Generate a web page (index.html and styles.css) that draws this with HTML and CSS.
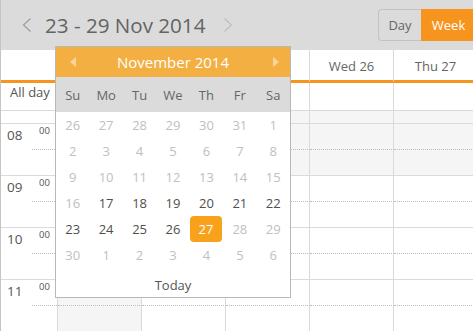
FILE: index.html
```html
<!DOCTYPE html>
<html>
<head>
<meta charset="utf-8">
<title>Scheduler</title>
<link rel="stylesheet" href="styles.css">
</head>
<body>
<div class="scheduler">
  <div class="toolbar">
    <span class="nav-btn prev"><svg width="10" height="14" viewBox="0 0 10 14"><polyline points="8.5,0.5 1.5,7 8.5,13.5" fill="none" stroke="#9a9a9a" stroke-width="1.1"/></svg></span>
    <span class="range">23 - 29 Nov 2014</span>
    <span class="nav-btn next"><svg width="10" height="14" viewBox="0 0 10 14"><polyline points="1.5,0.5 8.5,7 1.5,13.5" fill="none" stroke="#bdbdbd" stroke-width="1.1"/></svg></span>
    <div class="views">
      <span class="view day">Day</span>
      <span class="view week">Week</span>
    </div>
  </div>

  <div class="head-row days">
    <div class="tcell"></div>
    <div class="dcell">Sun 23</div>
    <div class="dcell">Mon 24</div>
    <div class="dcell">Tue 25</div>
    <div class="dcell">Wed 26</div>
    <div class="dcell">Thu 27</div>
    <div class="dcell">Fri 28</div>
    <div class="dcell">Sat 29</div>
  </div>
  <div class="head-row allday">
    <div class="tcell">All day</div>
    <div class="dcell"></div><div class="dcell"></div><div class="dcell"></div><div class="dcell"></div><div class="dcell"></div><div class="dcell"></div><div class="dcell"></div>
  </div>

  <div class="content">
    <div class="row part">
      <div class="tcell"></div>
      <div class="dcell off"></div><div class="dcell off"></div><div class="dcell off"></div><div class="dcell off"></div><div class="dcell off"></div><div class="dcell off"></div><div class="dcell off"></div>
    </div>
    <div class="row half1">
      <div class="tcell"><span class="hr">08</span><span class="mn">00</span></div>
      <div class="dcell off"></div><div class="dcell off"></div><div class="dcell off"></div><div class="dcell off"></div><div class="dcell off"></div><div class="dcell off"></div><div class="dcell off"></div>
    </div>
    <div class="row half2">
      <div class="tcell"></div>
      <div class="dcell off"></div><div class="dcell off"></div><div class="dcell off"></div><div class="dcell off"></div><div class="dcell off"></div><div class="dcell off"></div><div class="dcell off"></div>
    </div>
    <div class="row half1">
      <div class="tcell"><span class="hr">09</span><span class="mn">00</span></div>
      <div class="dcell off"></div><div class="dcell"></div><div class="dcell"></div><div class="dcell"></div><div class="dcell"></div><div class="dcell"></div><div class="dcell off"></div>
    </div>
    <div class="row half2">
      <div class="tcell"></div>
      <div class="dcell off"></div><div class="dcell"></div><div class="dcell"></div><div class="dcell"></div><div class="dcell"></div><div class="dcell"></div><div class="dcell off"></div>
    </div>
    <div class="row half1">
      <div class="tcell"><span class="hr">10</span><span class="mn">00</span></div>
      <div class="dcell off"></div><div class="dcell"></div><div class="dcell"></div><div class="dcell"></div><div class="dcell"></div><div class="dcell"></div><div class="dcell off"></div>
    </div>
    <div class="row half2">
      <div class="tcell"></div>
      <div class="dcell off"></div><div class="dcell"></div><div class="dcell"></div><div class="dcell"></div><div class="dcell"></div><div class="dcell"></div><div class="dcell off"></div>
    </div>
    <div class="row half1">
      <div class="tcell"><span class="hr">11</span><span class="mn">00</span></div>
      <div class="dcell off"></div><div class="dcell"></div><div class="dcell"></div><div class="dcell"></div><div class="dcell"></div><div class="dcell"></div><div class="dcell off"></div>
    </div>
    <div class="row half2">
      <div class="tcell"></div>
      <div class="dcell off"></div><div class="dcell"></div><div class="dcell"></div><div class="dcell"></div><div class="dcell"></div><div class="dcell"></div><div class="dcell off"></div>
    </div>
  </div>

  <div class="popup">
    <div class="cal-head">
      <span class="arr left"></span>
      <span class="cal-title">November 2014</span>
      <span class="arr right"></span>
    </div>
    <div class="cal-dow">
      <span>Su</span><span>Mo</span><span>Tu</span><span>We</span><span>Th</span><span>Fr</span><span>Sa</span>
    </div>
    <div class="cal-grid">
      <span class="dis">26</span><span class="dis">27</span><span class="dis">28</span><span class="dis">29</span><span class="dis">30</span><span class="dis">31</span><span class="dis">1</span>
      <span class="dis">2</span><span class="dis">3</span><span class="dis">4</span><span class="dis">5</span><span class="dis">6</span><span class="dis">7</span><span class="dis">8</span>
      <span class="dis">9</span><span class="dis">10</span><span class="dis">11</span><span class="dis">12</span><span class="dis">13</span><span class="dis">14</span><span class="dis">15</span>
      <span class="dis">16</span><span>17</span><span>18</span><span>19</span><span>20</span><span>21</span><span>22</span>
      <span>23</span><span>24</span><span>25</span><span>26</span><span class="sel">27</span><span class="dis">28</span><span class="dis">29</span>
      <span class="dis">30</span><span class="dis">1</span><span class="dis">2</span><span class="dis">3</span><span class="dis">4</span><span class="dis">5</span><span class="dis">6</span>
    </div>
    <div class="cal-foot">Today</div>
  </div>
</div>
</body>
</html>
```

FILE: styles.css
```css
html, body {
  margin: 0;
  padding: 0;
  overflow: hidden;
  background: #ffffff;
}

body {
  font-family: "Open Sans", "Noto Sans", sans-serif;
  font-size: 13px;
  color: #555555;
}

.scheduler {
  position: relative;
  width: 480px;
  height: 340px;
  border-left: 1px solid #c5c5c5;
  overflow: hidden;
}

/* toolbar */
.toolbar {
  display: flex;
  align-items: center;
  height: 50px;
  padding: 0 5px 0 21px;
  background: #dbdbdb;
}

.nav-btn {
  display: flex;
  width: 10px;
  height: 14px;
}

.prev {
  margin-right: 13px;
}

.next {
  margin-left: 18px;
}

.range {
  font-size: 20.6px;
  color: #646464;
  line-height: 26px;
}

.views {
  display: flex;
  margin-left: auto;
  height: 32px;
}

.view {
  display: flex;
  align-items: center;
  justify-content: center;
  box-sizing: border-box;
  height: 32px;
  font-size: 13px;
}

.view.day {
  width: 43px;
  border: 1px solid #c2c2c2;
  border-right: none;
  border-radius: 4px 0 0 4px;
  color: #666666;
}

.view.week {
  width: 55px;
  background: #f7941d;
  color: #ffffff;
}

/* header rows */
.head-row,
.row {
  display: grid;
  grid-template-columns: 57px repeat(7, 84px);
}

.head-row > div,
.row > div {
  box-sizing: border-box;
  border-right: 1px solid #dadada;
}

.days > div {
  height: 33px;
  border-bottom: 3px solid #f7941d;
  text-align: center;
  line-height: 30px;
  padding-top: 1px;
  color: #666666;
}

.allday > div {
  height: 28px;
  border-bottom: 1px solid #dadada;
}

.allday .tcell {
  padding: 1px 0 0 9px;
  line-height: 17px;
  color: #555555;
}

/* content rows */
.row.part > div {
  height: 13px;
  border-bottom: 1px solid #dadada;
}

.row.half1 > div,
.row.half2 > div {
  height: 26px;
}

.row.half1 > .dcell {
  border-bottom: 1px dotted #bdbdbd;
}

.row.half2 > div {
  border-bottom: 1px solid #dadada;
}

.row.half1 > .tcell {
  display: flex;
}

.hr {
  width: 31px;
  box-sizing: border-box;
  padding: 3px 0 0 6px;
  line-height: 16px;
  font-size: 13.5px;
  color: #555555;
}

.mn {
  flex: 1;
  box-sizing: border-box;
  padding: 1px 0 0 7px;
  font-size: 9.5px;
  line-height: 12px;
  color: #555555;
  border-bottom: 1px dotted #bdbdbd;
}

.off {
  background: #f4f5f4;
}

/* calendar popup */
.popup {
  position: absolute;
  left: 54px;
  top: 46px;
  width: 236px;
  box-sizing: border-box;
  border: 1px solid #b8b8b8;
  background: #ffffff;
}

.cal-head {
  display: grid;
  grid-template-columns: 30px 1fr 30px;
  align-items: center;
  height: 30px;
  background: #f3af42;
}

.cal-title {
  text-align: center;
  color: #ffffff;
  font-size: 15px;
}

.arr {
  width: 0;
  height: 0;
  border-top: 5px solid transparent;
  border-bottom: 5px solid transparent;
}

.arr.left {
  justify-self: start;
  margin-left: 14px;
  border-right: 6px solid #f9d59d;
}

.arr.right {
  justify-self: end;
  margin-right: 11px;
  border-left: 6px solid #f9d59d;
}

.cal-dow {
  display: grid;
  grid-template-columns: repeat(7, 1fr);
  height: 35px;
  align-items: center;
  background: #dbdbdb;
  color: #666666;
  text-align: center;
}

.cal-grid {
  display: grid;
  grid-template-columns: repeat(7, 1fr);
  grid-auto-rows: 26px;
  text-align: center;
  line-height: 26px;
  color: #4f4f4f;
}

.cal-grid .dis {
  color: #c0c0c0;
}

.cal-grid .sel {
  background: #f8a11b;
  color: #ffffff;
  border-radius: 4px;
  margin-right: 1px;
}

.cal-foot {
  height: 29px;
  box-sizing: border-box;
  padding-top: 7px;
  text-align: center;
  line-height: 20px;
  color: #555555;
}
```
